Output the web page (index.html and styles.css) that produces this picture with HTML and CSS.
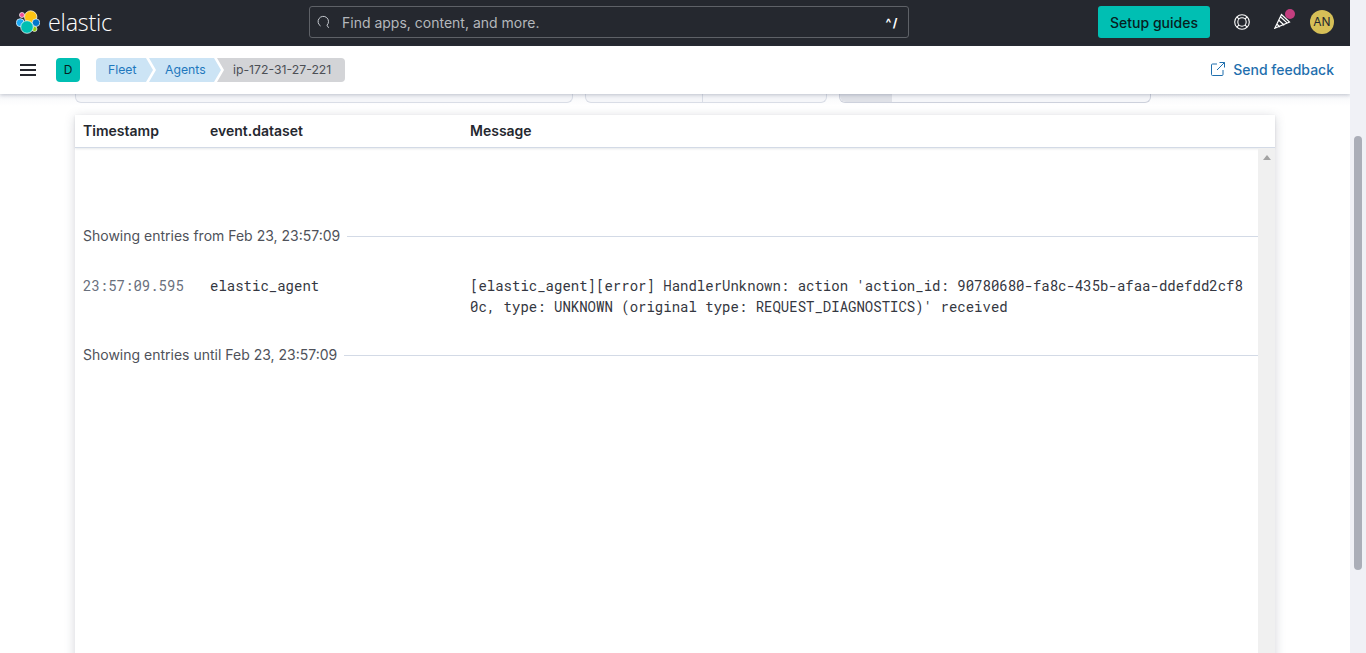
FILE: index.html
```html
<!DOCTYPE html>
<html lang="en">
<head>
    <meta charset="UTF-8">
    <title>Agent logs - Fleet - Elastic</title>
    <link rel="stylesheet" href="styles.css">
</head>
<body>
    <div class="page">
        <div class="main">
            <header class="top-bar">
                <div class="brand">
                    <svg class="brand-logo" width="24" height="24" viewBox="0 0 24 24" stroke="#fff" stroke-width="0.7">
                        <circle cx="6" cy="5" r="2.5" fill="#f04e98"/>
                        <circle cx="14.700" cy="7" r="6.200" fill="#fec514"/>
                        <circle cx="4.300" cy="12.700" r="4" fill="#1ba9f5"/>
                        <circle cx="20" cy="12.700" r="3.800" fill="#0077cc"/>
                        <circle cx="18.500" cy="19" r="2.500" fill="#93c90e"/>
                        <circle cx="11" cy="17" r="6.300" fill="#00bfb3"/>
                    </svg>
                    <span class="brand-name">elastic</span>
                </div>
                <div class="search">
                    <svg class="search-icon" width="14" height="14" viewBox="0 0 14 14" fill="none" stroke="#c8ccd2" stroke-width="1">
                        <path d="M10 10.2A5.2 5.2 0 1 0 3.6 11M10 10.2l1.6 2.6"/>
                    </svg>
                    <span class="search-text">Find apps, content, and more.</span>
                    <span class="search-key">^/</span>
                </div>
                <div class="top-actions">
                    <button class="setup-btn">Setup guides</button>
                    <svg class="help-icon" width="16" height="16" viewBox="0 0 16 16" fill="none" stroke="#fff" stroke-width="1.100">
                        <circle cx="8" cy="8" r="7.300"/>
                        <circle cx="8" cy="8" r="4.200"/>
                        <path d="M2.800 2.800l2.300 2.300M13.200 2.800l-2.300 2.300M2.800 13.200l2.300-2.300M13.200 13.200l-2.300-2.300"/>
                    </svg>
                    <div class="news">
                        <svg width="17" height="16" viewBox="0 0 17 16" fill="none" stroke="#fff" stroke-width="1.200">
                            <path d="M0.800 15.200L7.500 1.500l8 7.500zM2.800 11l3.200 3M4.600 7l5.700 5.200M6.400 3.800l6.300 5.800"/>
                        </svg>
                        <span class="news-dot"></span>
                    </div>
                    <div class="avatar">AN</div>
                </div>
            </header>

            <nav class="sub-bar">
                <button class="menu-btn" aria-label="Menu"><span></span><span></span><span></span></button>
                <div class="space-badge">D</div>
                <div class="crumbs">
                    <a class="crumb crumb-first">Fleet</a>
                    <a class="crumb crumb-mid">Agents</a>
                    <span class="crumb crumb-last">ip-172-31-27-221</span>
                </div>
                <a class="feedback">
                    <svg width="14" height="14" viewBox="0 0 14 14" fill="none" stroke="#1f6fae" stroke-width="1">
                        <path d="M6 2H1.500A1 1 0 0 0 .5 3v9.500a1 1 0 0 0 1 1H11a1 1 0 0 0 1-1V8M8.500.5h5v5M13.500.5L6 8"/>
                    </svg>
                    Send feedback
                </a>
            </nav>

            <div class="content">
                <div class="controls">
                    <div class="ctl ctl-search"></div>
                    <div class="ctl ctl-dates"><span></span></div>
                    <div class="ctl ctl-range"><span></span></div>
                </div>

                <section class="log-panel">
                    <div class="log-head">
                        <div class="col-time">Timestamp</div>
                        <div class="col-set">event.dataset</div>
                        <div class="col-msg">Message</div>
                    </div>
                    <div class="log-wrap">
                        <div class="log-body">
                            <div class="marker marker-from"><span>Showing entries from Feb 23, 23:57:09</span></div>
                            <div class="log-row">
                                <div class="col-time cell-time">23:57:09.595</div>
                                <div class="col-set cell">elastic_agent</div>
                                <div class="col-msg cell">[elastic_agent][error] HandlerUnknown: action 'action_id: 90780680-fa8c-435b-afaa-ddefdd2cf80c, type: UNKNOWN (original type: REQUEST_DIAGNOSTICS)' received</div>
                            </div>
                            <div class="marker"><span>Showing entries until Feb 23, 23:57:09</span></div>
                        </div>
                        <div class="log-scroll"><i class="arrow-up"></i></div>
                    </div>
                </section>
            </div>
        </div>
        <div class="page-scroll"><div class="page-thumb"></div></div>
    </div>
</body>
</html>
```

FILE: styles.css
```css
* {
    box-sizing: border-box;
}

html, body {
    margin: 0;
    height: 100%;
    overflow: hidden;
}

body {
    background-color: #fff;
    color: #343741;
    font-family: Inter, "Liberation Sans", sans-serif;
    font-size: 14px;
}

.page {
    display: flex;
    height: 653px;
}

.main {
    flex: 1;
    min-width: 0;
    display: flex;
    flex-direction: column;
    overflow: hidden;
}

/* Top dark bar */
.top-bar {
    height: 46px;
    flex: none;
    background-color: #25282f;
    display: flex;
    align-items: center;
    padding: 0 0 2px 16px;
}

.brand {
    width: 293px;
    display: flex;
    align-items: center;
    gap: 8px;
}

.brand-name {
    color: #fff;
    font-family: "Open Sans", sans-serif;
    font-size: 23.3px;
    font-weight: 300;
    letter-spacing: -0.2px;
    line-height: 24px;
}

.search {
    width: 600px;
    height: 32px;
    border: 1px solid #5e6167;
    border-radius: 3px;
    display: flex;
    align-items: center;
    padding: 0 9px 0 7px;
    color: #b4b7bc;
}

.search-icon {
    margin-right: 11px;
}

.search-text {
    flex: 1;
}

.search-key {
    color: #fff;
    font-size: 12px;
    font-weight: 700;
    letter-spacing: 1.5px;
}

.top-actions {
    margin-left: auto;
    display: flex;
    align-items: center;
    padding-right: 16px;
}

.setup-btn {
    width: 112px;
    height: 32px;
    border: none;
    border-radius: 3px;
    background-color: #00bfb3;
    color: #07211f;
    font-family: inherit;
    font-size: 14px;
    font-weight: 500;
    margin-right: 24px;
    padding: 0;
}

.help-icon {
    margin-right: 24px;
}

.news {
    position: relative;
    width: 17px;
    height: 16px;
    margin: 0 19px 0 0;
}

.news svg {
    display: block;
    margin-top: -1px;
}

.news-dot {
    position: absolute;
    top: -5px;
    right: -4px;
    width: 10px;
    height: 10px;
    border-radius: 50%;
    background-color: #c43e7f;
}

.avatar {
    width: 24px;
    height: 24px;
    border-radius: 50%;
    background-color: #d6bf57;
    color: #25282f;
    font-size: 12px;
    line-height: 24px;
    text-align: center;
}

/* Breadcrumb bar */
.sub-bar {
    height: 48px;
    flex: none;
    background-color: #fff;
    display: flex;
    align-items: center;
    padding: 0 16px 0 20px;
    box-shadow: 0 1px 4px rgba(60, 70, 100, 0.3);
    position: relative;
    z-index: 2;
}

.menu-btn {
    width: 16px;
    height: 12px;
    padding: 0;
    border: none;
    background: none;
    display: flex;
    flex-direction: column;
    justify-content: space-between;
    margin-right: 20px;
}

.menu-btn span {
    display: block;
    height: 2px;
    background-color: #25282f;
}

.space-badge {
    width: 24px;
    height: 24px;
    border-radius: 4px;
    background-color: #00bfb3;
    color: #07211f;
    font-size: 12px;
    line-height: 24px;
    text-align: center;
    margin-right: 16px;
}

.crumbs {
    display: flex;
    font-size: 12.25px;
}

.crumb {
    height: 24px;
    line-height: 24px;
    display: block;
}

.crumb-first {
    width: 57px;
    padding-left: 12px;
    background-color: #cce4f5;
    color: #1f78bd;
    border-radius: 4px 0 0 4px;
    clip-path: polygon(0 0, calc(100% - 7px) 0, 100% 50%, calc(100% - 7px) 100%, 0 100%);
}

.crumb-mid {
    width: 72px;
    margin-left: -4px;
    padding-left: 16px;
    background-color: #cce4f5;
    color: #1f78bd;
    clip-path: polygon(0 0, calc(100% - 7px) 0, 100% 50%, calc(100% - 7px) 100%, 0 100%, 7px 50%);
}

.crumb-last {
    width: 128px;
    margin-left: -4px;
    padding-left: 16px;
    background-color: #d3d4d7;
    color: #4c4f55;
    border-radius: 0 4px 4px 0;
    clip-path: polygon(0 0, 100% 0, 100% 100%, 0 100%, 7px 50%);
}

.feedback {
    margin-left: auto;
    display: flex;
    align-items: center;
    gap: 8px;
    padding-bottom: 2px;
    color: #1f6fae;
    font-weight: 500;
}

/* Content */
.content {
    flex: 1;
    min-height: 0;
    padding: 0 75px;
    background: linear-gradient(#f6f7f9, #fff 12px);
}

.controls {
    display: flex;
    height: 9px;
    margin-right: 124px;
}

.ctl {
    height: 9px;
    border: 1px solid #d9dde6;
    border-top: none;
    border-radius: 0 0 6px 6px;
    background-color: #f5f6f9;
}

.ctl-search {
    width: 498px;
    margin-right: 12px;
}

.ctl-dates {
    width: 242px;
    margin-right: 12px;
}

.ctl-dates span {
    display: block;
    width: 117px;
    height: 8px;
    border-right: 1px solid #d9dde6;
}

.ctl-range {
    width: 312px;
    border-color: #cdd1dc;
}

.ctl-range span {
    display: block;
    width: 52px;
    height: 8px;
    background-color: #dfe1e7;
    border-radius: 0 0 0 6px;
}

.log-panel {
    margin-top: 12px;
    height: 560px;
    background-color: #fff;
    box-shadow: 0 2px 10px rgba(60, 70, 90, 0.22);
    display: flex;
    flex-direction: column;
}

.log-head {
    height: 33px;
    flex: none;
    display: flex;
    align-items: center;
    padding: 0 0 2px 8px;
    border-bottom: 1px solid #d3dae6;
    box-shadow: 0 1px 2px rgba(60, 70, 90, 0.12);
    color: #25282f;
    font-size: 14px;
    font-weight: 600;
}

.col-time {
    width: 127px;
    flex: none;
}

.col-set {
    width: 260px;
    flex: none;
}

.col-msg {
    flex: 1;
    min-width: 0;
}

.log-wrap {
    flex: 1;
    min-height: 0;
    display: flex;
}

.log-body {
    flex: 1;
    min-width: 0;
    padding-left: 8px;
}

.log-scroll {
    width: 17px;
    flex: none;
    background-color: #f0f0f0;
    padding: 7px 0 0 5px;
}

.arrow-up {
    display: block;
    width: 0;
    height: 0;
    border-left: 4px solid transparent;
    border-right: 4px solid transparent;
    border-bottom: 5px solid #a3a3a3;
}

.marker {
    display: flex;
    align-items: center;
    height: 20px;
    gap: 7px;
    color: #4f525a;
    font-size: 14px;
}

.marker span {
    padding-bottom: 2px;
}

.marker::after {
    content: "";
    flex: 1;
    height: 1px;
    background-color: #d3dae6;
}

.marker-from {
    margin-top: 78px;
}

.log-row {
    display: flex;
    margin: 29px 0 28px;
    font-family: "Roboto Mono", "DejaVu Sans Mono", "Liberation Mono", monospace;
    font-size: 14px;
    line-height: 21px;
    color: #343741;
}

.cell-time {
    color: #69707d;
}

.cell {
    overflow-wrap: anywhere;
    word-break: break-all;
}

.log-row .col-msg {
    padding-right: 8px;
}

/* Page scrollbar */
.page-scroll {
    width: 16px;
    flex: none;
    background-color: #f0f1f6;
    padding: 136px 4px 0;
}

.page-thumb {
    height: 434px;
    border-radius: 4px;
    background-color: #abaeb8;
}
```
